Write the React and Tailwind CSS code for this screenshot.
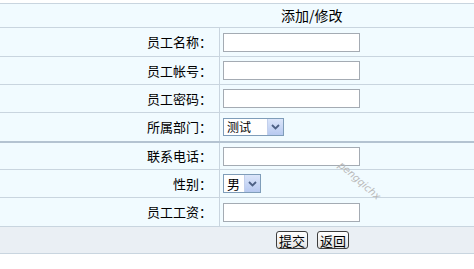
import React from "react";

const font = { fontFamily: '"Noto Sans CJK SC", "Noto Sans", sans-serif' };

function Arrow() {
  return (
    <div className="w-[16px] h-full bg-gradient-to-b from-[#dce6fa] to-[#b7c9f0] border-l border-[#c3d0ec] flex items-center justify-center">
      <svg width="9" height="6" viewBox="0 0 9 6">
        <path d="M1 1 L4.5 4.5 L8 1" fill="none" stroke="#4d6185" strokeWidth="1.8" />
      </svg>
    </div>
  );
}

function Row({ label, h, children, thick }) {
  return (
    <div
      className={`flex ${thick ? "border-t-2 border-[#b4c3d1]" : "border-t border-[#c9d5df]"} ${h}`}
    >
      <div className="w-[220px] shrink-0 border-r border-[#c9d5df] flex items-center justify-end pr-[7px] text-[13px] text-black">
        {label}
      </div>
      <div className="flex-1 flex items-center pl-[3px]">{children}</div>
    </div>
  );
}

function TextInput() {
  return (
    <input
      type="text"
      className="w-[137px] h-[19px] border border-[#a4abb3] bg-white outline-none"
    />
  );
}

export default function App() {
  return (
    <div className="w-[474px] h-[269px] bg-white relative overflow-hidden" style={font}>
      <div className="mt-[3px] border-t border-[#c9d5df] bg-[#f1fbff]">
        <div className="h-[23px] flex items-center pl-[281px] text-[14px] text-black">
          添加/修改
        </div>
        <Row label="员工名称：" h="h-[29px]">
          <TextInput />
        </Row>
        <Row label="员工帐号：" h="h-[28px]">
          <TextInput />
        </Row>
        <Row label="员工密码：" h="h-[28px]">
          <TextInput />
        </Row>
        <Row label="所属部门：" h="h-[29px]">
          <div className="w-[61px] h-[18px] border border-[#7f9db9] bg-white flex items-stretch">
            <div className="flex-1 flex items-center pl-[3px] text-[12px] leading-none">测试</div>
            <Arrow />
          </div>
        </Row>
        <Row label="联系电话：" h="h-[28px]" thick>
          <TextInput />
        </Row>
        <Row label="性别：" h="h-[28px]">
          <div className="w-[38px] h-[19px] border border-[#7f9db9] bg-white flex items-stretch">
            <div className="flex-1 flex items-center pl-[3px] text-[13px] leading-none">男</div>
            <Arrow />
          </div>
        </Row>
        <Row label="员工工资：" h="h-[29px]">
          <TextInput />
        </Row>
        <div className="h-[28px] border-t border-[#c9d5df] border-b border-b-[#c9d5df] bg-[#eaeff4] flex items-center pl-[276px] gap-[9px]">
          <button className="w-[32px] h-[18px] rounded-[3px] border border-[#3d3d3d] bg-gradient-to-b from-white to-[#e4e4e4] text-[13px] leading-none flex items-center justify-center">
            提交
          </button>
          <button className="w-[32px] h-[18px] rounded-[3px] border border-[#3d3d3d] bg-gradient-to-b from-white to-[#e4e4e4] text-[13px] leading-none flex items-center justify-center">
            返回
          </button>
        </div>
      </div>
      <div
        className="absolute left-[340px] top-[156px] text-[10px] text-[#b9b9b9] italic origin-left pointer-events-none"
        style={{ transform: "rotate(41deg)", fontFamily: '"DejaVu Sans", sans-serif' }}
      >
        pengqichx
      </div>
    </div>
  );
}
